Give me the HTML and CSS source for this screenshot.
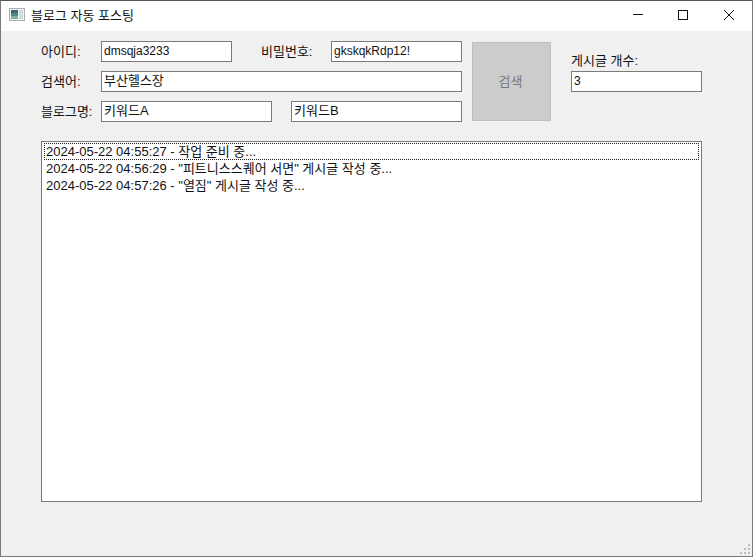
FILE: index.html
```html
<!DOCTYPE html>
<html lang="ko">
<head>
<meta charset="utf-8">
<title>블로그 자동 포스팅</title>
<link rel="stylesheet" href="styles.css">
</head>
<body>
<div class="window">
  <header class="titlebar">
    <svg class="app-icon" width="16" height="16" viewBox="0 0 16 16">
      <rect x="0.5" y="1.5" width="15" height="12" fill="#f4f4f4" stroke="#a9b0b0"/>
      <rect x="2" y="3" width="7" height="9" fill="#4d8a80"/>
      <rect x="2" y="3" width="7" height="3" fill="#3d6678"/>
      <rect x="2" y="9" width="7" height="3" fill="#7fb3a0"/>
      <rect x="10" y="3" width="4" height="9" fill="#d5dbdb"/>
    </svg>
    <span class="title">블로그 자동 포스팅</span>
    <div class="controls">
      <div class="control"><svg width="11" height="11" viewBox="0 0 11 11"><path d="M1 4.5h10" stroke="#111" fill="none"/></svg></div>
      <div class="control"><svg width="11" height="11" viewBox="0 0 11 11"><rect x="0.5" y="0.5" width="9" height="9" stroke="#111" fill="none"/></svg></div>
      <div class="control"><svg width="11" height="11" viewBox="0 0 11 11"><path d="M0 0l10 10M10 0L0 10" stroke="#111" fill="none"/></svg></div>
    </div>
  </header>
  <main class="content">
    <section class="form">
      <div class="fields">
        <div class="row">
          <label class="label lbl-main">아이디:</label>
          <div class="input latin w-131">dmsqja3233</div>
          <label class="label lbl-pw">비밀번호:</label>
          <div class="input latin w-131">gkskqkRdp12!</div>
        </div>
        <div class="row">
          <label class="label lbl-main">검색어:</label>
          <div class="input w-361">부산헬스장</div>
        </div>
        <div class="row">
          <label class="label lbl-main">블로그명:</label>
          <div class="input w-171">키워드A</div>
          <div class="input w-171 gap-left">키워드B</div>
        </div>
      </div>
      <button class="search" type="button" disabled>검색</button>
      <div class="count">
        <label class="label">게시글 개수:</label>
        <div class="input latin w-131">3</div>
      </div>
    </section>
    <section class="log">
      <div class="log-item selected">2024-05-22 04:55:27 - 작업 준비 중...</div>
      <div class="log-item">2024-05-22 04:56:29 - "피트니스스퀘어 서면" 게시글 작성 중...</div>
      <div class="log-item">2024-05-22 04:57:26 - "열짐" 게시글 작성 중...</div>
    </section>
  </main>
  <svg class="grip" width="11" height="11" viewBox="0 0 11 11" fill="#bdbdbd">
    <rect x="8" y="0" width="2" height="2"/><rect x="8" y="4" width="2" height="2"/><rect x="4" y="4" width="2" height="2"/>
    <rect x="8" y="8" width="2" height="2"/><rect x="4" y="8" width="2" height="2"/><rect x="0" y="8" width="2" height="2"/>
  </svg>
</div>
</body>
</html>
```

FILE: styles.css
```css
* { box-sizing: border-box; }
html, body { margin: 0; padding: 0; }
body {
  width: 753px;
  height: 557px;
  font-family: "Liberation Sans", "Noto Sans CJK KR", sans-serif;
  font-size: 13px;
  color: #111;
  overflow: hidden;
}
.window {
  position: relative;
  width: 753px;
  height: 557px;
  background: #f0f0f0;
  border: 1px solid #7a7a7a;
  border-top-color: #555;
  display: flex;
  flex-direction: column;
}
.titlebar {
  height: 30px;
  background: #fff;
  display: flex;
  align-items: center;
  padding-left: 8px;
  flex: none;
}
.app-icon { flex: none; margin-bottom: 2px; }
.title { margin: 0 0 3px 6px; }
.controls { margin-left: auto; display: flex; gap: 1px; height: 100%; }
.control {
  width: 45px;
  height: 100%;
  padding-top: 9px;
  display: flex;
  align-items: flex-start;
  justify-content: center;
}
.content { padding: 10px 0 0 40px; }
.form { display: flex; align-items: flex-start; }
.fields { display: flex; flex-direction: column; gap: 9px; width: 421px; }
.row { display: flex; align-items: center; height: 21px; }
.label { white-space: nowrap; padding-bottom: 2px; }
.lbl-main { width: 60px; }
.lbl-pw { width: 71px; margin-left: 29px; margin-right: -1px; }
.input {
  height: 21px;
  background: #fff;
  border: 1px solid #7a7a7a;
  padding: 0 2px;
  line-height: 18px;
  white-space: nowrap;
  overflow: hidden;
}
.latin { font-size: 12px; line-height: 19px; }
.w-131 { width: 131px; }
.w-171 { width: 171px; }
.w-361 { width: 361px; }
.gap-left { margin-left: 19px; }
.search {
  width: 79px;
  height: 79px;
  margin: 1px 0 0 10px;
  padding: 0 2px 2px 0;
  background: #cccccc;
  border: 1px solid #bfbfbf;
  color: #7a7a7a;
  font: inherit;
}
.count {
  margin-left: 20px;
  padding-top: 12px;
  display: flex;
  flex-direction: column;
}
.count .label { line-height: 16px; height: 18px; }
.log {
  width: 661px;
  height: 361px;
  margin-top: 19px;
  background: #fff;
  border: 1px solid #7a7a7a;
  padding: 1px 2px;
}
.log-item {
  height: 17px;
  line-height: 15px;
  padding: 0 1px;
  white-space: nowrap;
  border: 1px dotted transparent;
}
.log-item.selected { border-color: #222; }
.grip { position: absolute; right: 1px; bottom: 1px; }
```
